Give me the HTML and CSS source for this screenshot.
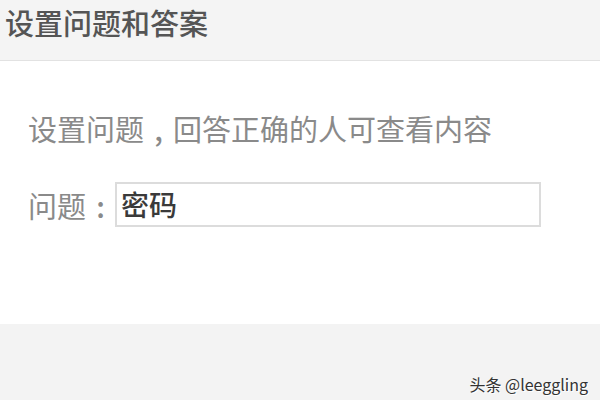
FILE: index.html
```html
<!DOCTYPE html>
<html lang="zh">
<head>
<meta charset="utf-8">
<link rel="stylesheet" href="styles.css">
</head>
<body>
<div class="header">设置问题和答案</div>
<div class="content">
  <p class="hint">设置问题<span class="punct">,</span>回答正确的人可查看内容</p>
  <div class="row">
    <span class="label">问题<span class="punct">:</span></span>
    <div class="input">密码</div>
  </div>
</div>
<div class="footer">
  <span class="mark">头条 @leeggling</span>
</div>
</body>
</html>
```
FILE: styles.css
```css
html, body {
  margin: 0;
  padding: 0;
}
body {
  width: 600px;
  height: 400px;
  background: #f3f3f3;
  font-family: "Noto Sans CJK SC", "Noto Sans", sans-serif;
  overflow: hidden;
}
.header {
  height: 61px;
  box-sizing: border-box;
  padding: 0 0 0 5px;
  background: #f4f4f4;
  border-bottom: 1px solid #e2e2e2;
  color: #555;
  font-size: 29px;
  font-weight: 500;
  line-height: 44px;
}
.content {
  height: 263px;
  box-sizing: border-box;
  background: #ffffff;
  padding: 47px 0 0 28px;
}
.punct {
  display: inline-block;
  width: 29px;
  text-align: center;
  font-weight: 500;
}
.hint {
  margin: 0;
  color: #8a8a8a;
  font-size: 29px;
  line-height: 40px;
  white-space: nowrap;
}
.row {
  display: flex;
  align-items: center;
  margin-top: 34px;
}
.label {
  flex-shrink: 0;
  white-space: nowrap;
  color: #8a8a8a;
  font-size: 29px;
  line-height: 40px;
  width: 87px;
}
.input {
  flex-shrink: 0;
  width: 426px;
  height: 45px;
  box-sizing: border-box;
  border: 2px solid #dcdcdc;
  color: #3a3a3a;
  font-size: 28px;
  font-weight: 500;
  line-height: 41px;
  padding-left: 4px;
}
.footer {
  height: 76px;
  display: flex;
  justify-content: flex-end;
  align-items: flex-end;
  padding-right: 12px;
}
.mark {
  font-family: "Noto Sans CJK SC", "Liberation Sans", sans-serif;
  font-size: 16px;
  color: #333;
  line-height: 20px;
  margin-bottom: 6px;
  text-shadow: 1px 1px 0 #fff;
}
```
